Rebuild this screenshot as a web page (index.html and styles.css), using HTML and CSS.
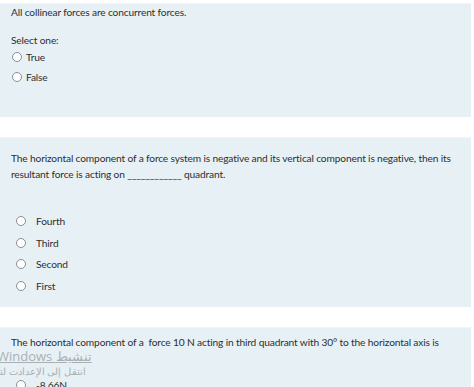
FILE: index.html
```html
<!DOCTYPE html>
<html>
<head>
<meta charset="utf-8">
<link rel="stylesheet" href="styles.css">
</head>
<body>
<div class="page">
  <div class="card q1">
    <p class="qtext">All collinear forces are concurrent forces.</p>
    <p class="prompt">Select one:</p>
    <div class="opts tight">
      <label class="opt"><span class="radio"></span>True</label>
      <label class="opt"><span class="radio"></span>False</label>
    </div>
  </div>
  <div class="card q2">
    <p class="qtext">The horizontal component of a force system is negative and its vertical component is negative, then its resultant force is acting on ____________ quadrant.</p>
    <div class="opts wide">
      <label class="opt"><span class="radio"></span>Fourth</label>
      <label class="opt"><span class="radio"></span>Third</label>
      <label class="opt"><span class="radio"></span>Second</label>
      <label class="opt"><span class="radio"></span>First</label>
    </div>
  </div>
  <div class="card q3">
    <p class="qtext">The horizontal component of a&nbsp; force 10 N acting in third quadrant with 30° to the horizontal axis is</p>
    <div class="opts wide last">
      <label class="opt"><span class="radio"></span>-8.66N</label>
    </div>
  </div>
</div>
<div class="watermark">
  <div class="wm1">Windows <span dir="rtl">تنشيط</span></div>
  <div class="wm2" dir="rtl">انتقل إلى الإعدادت لتنشيط</div>
</div>
</body>
</html>
```
FILE: styles.css
```css
html, body {
  margin: 0;
  padding: 0;
  background: #ffffff;
  overflow: hidden;
}
body {
  font-family: Lato, "Open Sans", sans-serif;
  font-size: 10.2px;
  letter-spacing: -0.15px;
  color: #2b2f33;
  width: 474px;
  height: 387px;
  position: relative;
}
.page {
  display: flex;
  flex-direction: column;
  gap: 20px;
  padding-top: 3px;
  width: 471px;
}
.card {
  box-sizing: border-box;
  background: #e7f1f5;
  border-top: 1px solid #edf5f8;
  padding: 0 11px;
  flex: none;
}
.q1 { height: 114px; padding-top: 0; }
.q2 { height: 170px; padding-top: 12px; }
.q3 { height: 80px; padding-top: 6px; }
p { margin: 0; }
.qtext { line-height: 16px; }
.prompt { margin-top: 12px; line-height: 16px; }
.opts { display: flex; flex-direction: column; }
.opts.tight { margin-top: 1px; gap: 4px; padding-left: 1px; }
.opts.tight .opt { gap: 4px; }
.opts.wide { margin-top: 31px; gap: 5.7px; padding-left: 5px; }
.opts.wide .opt { gap: 10px; }
.opts.last { margin-top: 27px; }
.opt {
  display: flex;
  align-items: center;
  height: 16px;
}
.radio {
  width: 8px;
  height: 8px;
  border: 1px solid #8a8f94;
  border-radius: 50%;
  background: #fff;
  flex: none;
}
.watermark {
  position: absolute;
  left: -3px;
  top: 348px;
  color: #a9b0b4;
  letter-spacing: 0;
  font-family: "Open Sans", "Noto Sans", sans-serif;
}
.wm1 {
  font-size: 13px;
  line-height: 16px;
  text-decoration: underline;
  text-decoration-thickness: 1px;
}
.wm2 {
  font-size: 10px;
  line-height: 14px;
  margin-left: -6px;
  width: 95px;
  overflow: hidden;
  white-space: nowrap;
  text-align: right;
}
```
